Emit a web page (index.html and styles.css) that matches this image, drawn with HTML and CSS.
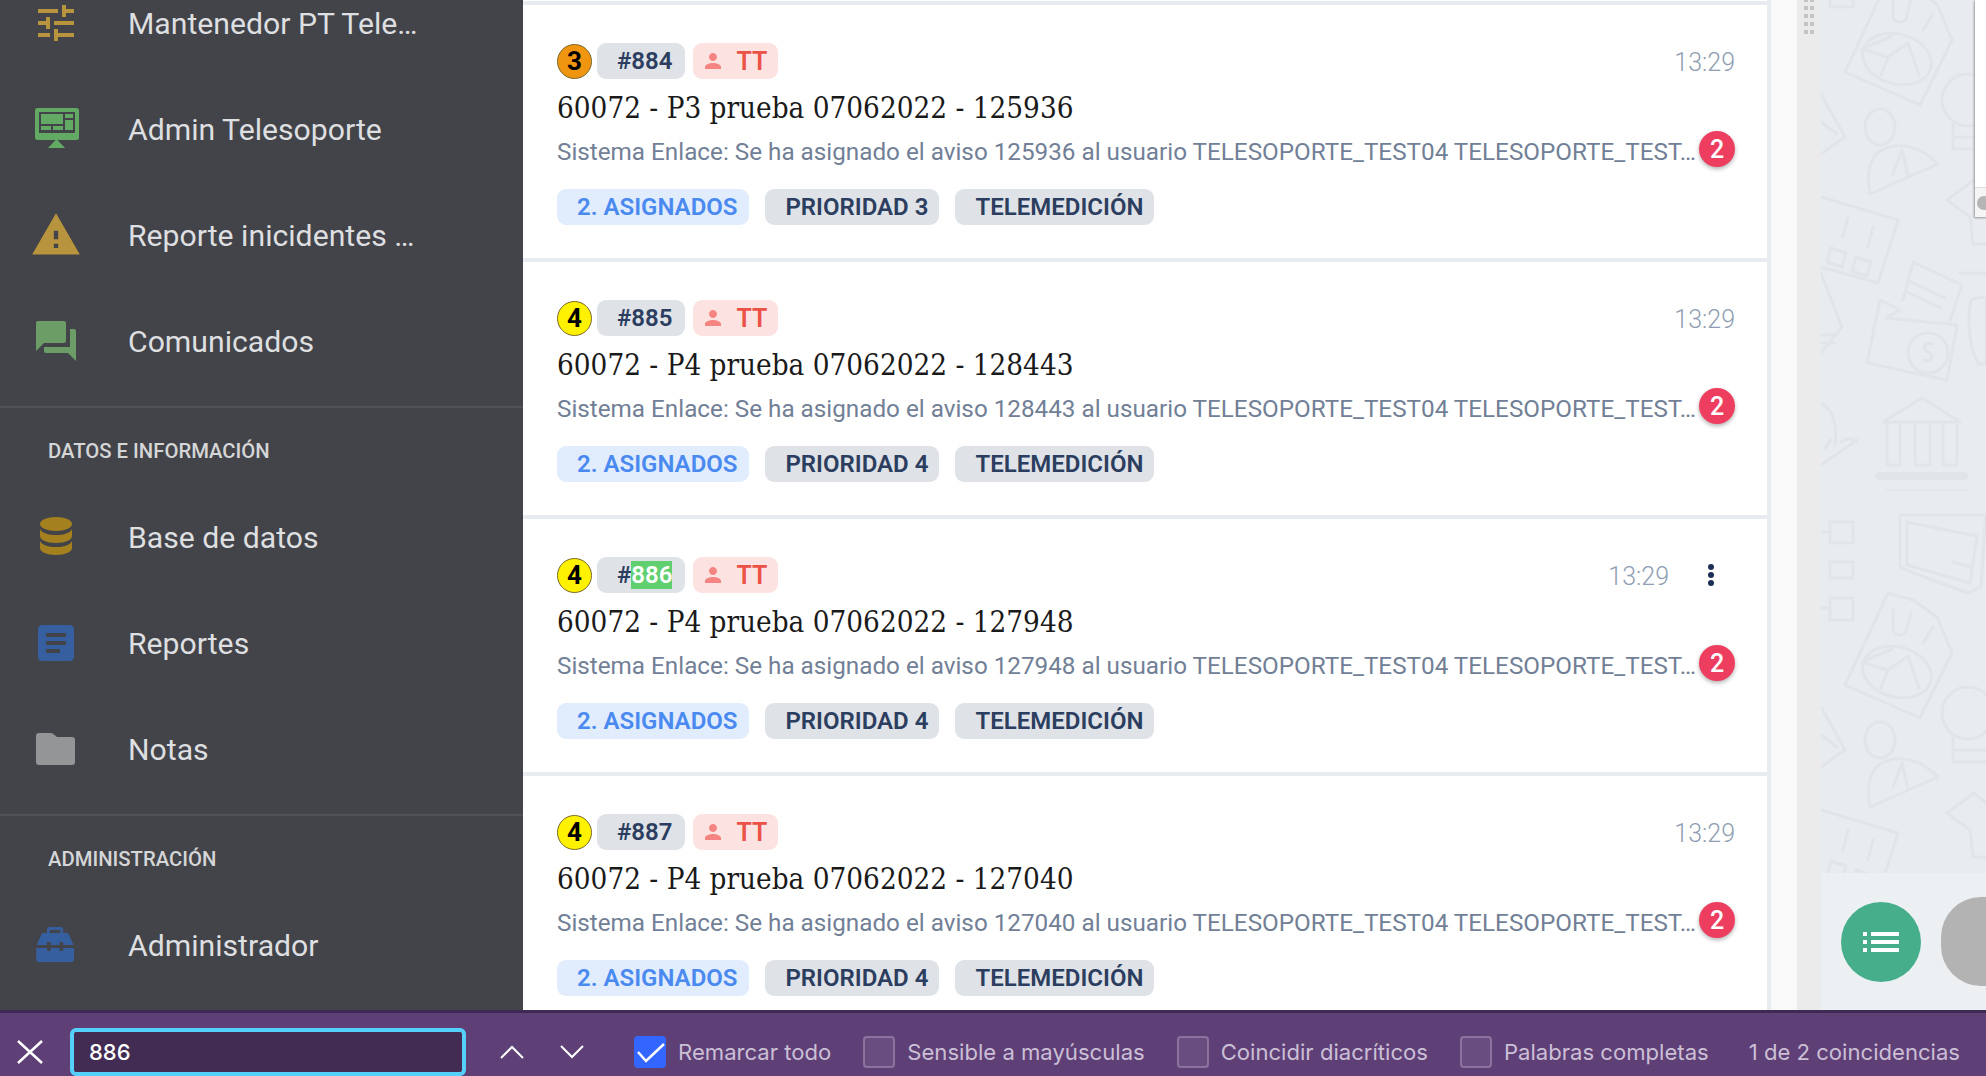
FILE: index.html
```html
<!DOCTYPE html>
<html lang="es">
<head>
<meta charset="utf-8">
<title>Telesoporte</title>
<link rel="stylesheet" href="styles.css">
</head>
<body>
<div class="app">
  <div class="main">
    <aside class="sidebar">
      <div class="side-scroll">
        <section class="side-group">
          <a class="side-item"><span class="side-icon"><svg class="ic-48 c-gold" viewBox="0 0 24 24"><path d="M3 17v2h6v-2H3zM3 5v2h10V5H3zm10 16v-2h8v-2h-8v-2h-2v6h2zM7 9v2H3v2h4v2h2V9H7zm14 4v-2H11v2h10zm-6-4h2V7h4V5h-4V3h-2v6z"/></svg></span><span class="side-label">Mantenedor PT Tele…</span></a>
          <a class="side-item"><span class="side-icon"><svg class="ic-48" viewBox="0 0 48 48"><rect x="3" y="3" width="44" height="32" rx="2.500" fill="#62a964"/><path d="M24.500 34 33 43H16z" fill="#62a964"/><rect x="7" y="7" width="36" height="21" fill="#434449"/><g fill="#62a964"><rect x="9" y="9" width="22" height="10"/><rect x="33" y="9" width="8" height="4"/><rect x="33" y="15" width="8" height="10"/><rect x="9" y="21" width="10" height="4"/><rect x="21" y="21" width="10" height="4"/></g></svg></span><span class="side-label">Admin Telesoporte</span></a>
          <a class="side-item"><span class="side-icon"><svg class="ic-52 c-gold" viewBox="0 0 24 24"><path d="M1 21h22L12 2 1 21zm12-3h-2v-2h2v2zm0-4h-2v-4h2v4z"/></svg></span><span class="side-label">Reporte inicidentes …</span></a>
          <a class="side-item"><span class="side-icon"><svg class="ic-48 c-green" viewBox="0 0 24 24"><path d="M21 6h-2v9H6v2c0 .55.45 1 1 1h11l4 4V7c0-.55-.45-1-1-1zm-4 6V3c0-.55-.45-1-1-1H3c-.55 0-1 .45-1 1v14l4-4h10c.55 0 1-.45 1-1z"/></svg></span><span class="side-label">Comunicados</span></a>
        </section>
        <section class="side-group">
          <h3 class="side-head">DATOS E INFORMACIÓN</h3>
          <a class="side-item"><span class="side-icon"><svg class="ic-48 c-ochre" viewBox="0 0 48 48"><ellipse cx="24" cy="11" rx="16" ry="7"/><path d="M8 16c2 4 8 6 16 6s14-2 16-6v7c0 4-7 7-16 7S8 27 8 23z"/><path d="M8 28c2 4 8 6 16 6s14-2 16-6v7c0 4-7 7-16 7S8 39 8 35z"/></svg></span><span class="side-label">Base de datos</span></a>
          <a class="side-item"><span class="side-icon"><svg class="ic-48 c-blue" viewBox="0 0 24 24"><path d="M19 3H5c-1.100 0-2 .9-2 2v14c0 1.100.9 2 2 2h14c1.100 0 2-.9 2-2V5c0-1.100-.9-2-2-2zm-5 14H7v-2h7v2zm3-4H7v-2h10v2zm0-4H7V7h10v2z"/></svg></span><span class="side-label">Reportes</span></a>
          <a class="side-item"><span class="side-icon"><svg class="ic-48 c-grey" viewBox="0 0 48 48"><path d="M7 8h12c1 0 2 .5 3 1.500L25 12h15c2 0 3 1 3 3v22c0 2-1 3-3 3H7c-2 0-3-1-3-3V11c0-2 1-3 3-3z"/></svg></span><span class="side-label">Notas</span></a>
        </section>
        <section class="side-group">
          <h3 class="side-head">ADMINISTRACIÓN</h3>
          <a class="side-item"><span class="side-icon"><svg class="ic-48 c-blue" viewBox="0 0 48 48"><g transform="translate(1.500 0) scale(.9 1)"><path d="M15 12V9c0-2 1-3 3-3h12c2 0 3 1 3 3v3h4c1 0 2 .5 2.500 2l5 10H33v-3h-4v3H19v-3h-4v3H3.500l5-10c.5-1.500 1.500-2 2.500-2zm3 0h12V9H18z"/><path d="M3 27h12v3h4v-3h10v3h4v-3h12v11c0 2-1 3-3 3H6c-2 0-3-1-3-3z"/></g></svg></span><span class="side-label">Administrador</span></a>
        </section>
      </div>
    </aside>

    <section class="list">
      <article class="card">
        <div class="card-top">
          <span class="prio prio-3">3</span>
          <span class="chip chip-id">#884</span>
          <span class="chip chip-user"><svg class="user-ic" viewBox="0 0 24 24"><path d="M12 12c2.210 0 4-1.790 4-4s-1.790-4-4-4-4 1.790-4 4 1.790 4 4 4zm0 2c-2.670 0-8 1.340-8 4v2h16v-2c0-2.660-5.330-4-8-4z"/></svg>TT</span>
          <time class="time">13:29</time>
        </div>
        <h2 class="title">60072 - P3 prueba 07062022 - 125936</h2>
        <div class="desc-row"><p class="desc">Sistema Enlace: Se ha asignado el aviso 125936 al usuario TELESOPORTE_TEST04 TELESOPORTE_TEST…</p><span class="badge">2</span></div>
        <div class="tags"><span class="chip chip-blue">2. ASIGNADOS</span><span class="chip chip-id">PRIORIDAD 3</span><span class="chip chip-id">TELEMEDICIÓN</span></div>
      </article>
      <article class="card">
        <div class="card-top">
          <span class="prio prio-4">4</span>
          <span class="chip chip-id">#885</span>
          <span class="chip chip-user"><svg class="user-ic" viewBox="0 0 24 24"><path d="M12 12c2.210 0 4-1.790 4-4s-1.790-4-4-4-4 1.790-4 4 1.790 4 4 4zm0 2c-2.670 0-8 1.340-8 4v2h16v-2c0-2.660-5.330-4-8-4z"/></svg>TT</span>
          <time class="time">13:29</time>
        </div>
        <h2 class="title">60072 - P4 prueba 07062022 - 128443</h2>
        <div class="desc-row"><p class="desc">Sistema Enlace: Se ha asignado el aviso 128443 al usuario TELESOPORTE_TEST04 TELESOPORTE_TEST…</p><span class="badge">2</span></div>
        <div class="tags"><span class="chip chip-blue">2. ASIGNADOS</span><span class="chip chip-id">PRIORIDAD 4</span><span class="chip chip-id">TELEMEDICIÓN</span></div>
      </article>
      <article class="card">
        <div class="card-top">
          <span class="prio prio-4">4</span>
          <span class="chip chip-id">#<mark class="hit">886</mark></span>
          <span class="chip chip-user"><svg class="user-ic" viewBox="0 0 24 24"><path d="M12 12c2.210 0 4-1.790 4-4s-1.790-4-4-4-4 1.790-4 4 1.790 4 4 4zm0 2c-2.670 0-8 1.340-8 4v2h16v-2c0-2.660-5.330-4-8-4z"/></svg>TT</span>
          <time class="time">13:29</time>
          <svg class="dots" viewBox="0 0 8 22"><circle cx="4" cy="3" r="3"/><circle cx="4" cy="11" r="3"/><circle cx="4" cy="19" r="3"/></svg>
        </div>
        <h2 class="title">60072 - P4 prueba 07062022 - 127948</h2>
        <div class="desc-row"><p class="desc">Sistema Enlace: Se ha asignado el aviso 127948 al usuario TELESOPORTE_TEST04 TELESOPORTE_TEST…</p><span class="badge">2</span></div>
        <div class="tags"><span class="chip chip-blue">2. ASIGNADOS</span><span class="chip chip-id">PRIORIDAD 4</span><span class="chip chip-id">TELEMEDICIÓN</span></div>
      </article>
      <article class="card">
        <div class="card-top">
          <span class="prio prio-4">4</span>
          <span class="chip chip-id">#887</span>
          <span class="chip chip-user"><svg class="user-ic" viewBox="0 0 24 24"><path d="M12 12c2.210 0 4-1.790 4-4s-1.790-4-4-4-4 1.790-4 4 1.790 4 4 4zm0 2c-2.670 0-8 1.340-8 4v2h16v-2c0-2.660-5.330-4-8-4z"/></svg>TT</span>
          <time class="time">13:29</time>
        </div>
        <h2 class="title">60072 - P4 prueba 07062022 - 127040</h2>
        <div class="desc-row"><p class="desc">Sistema Enlace: Se ha asignado el aviso 127040 al usuario TELESOPORTE_TEST04 TELESOPORTE_TEST…</p><span class="badge">2</span></div>
        <div class="tags"><span class="chip chip-blue">2. ASIGNADOS</span><span class="chip chip-id">PRIORIDAD 4</span><span class="chip chip-id">TELEMEDICIÓN</span></div>
      </article>
    </section>

    <div class="gutter"></div>
    <div class="handle">
      <span class="grip"></span>
    </div>

    <section class="chat">
      <div class="chat-bg">
        <svg class="doodles" viewBox="0 0 165 873" preserveAspectRatio="none">
          <defs>
            <g id="tile" fill="none" stroke="#e1e5e9" stroke-width="3" stroke-linejoin="round" stroke-linecap="round">
              <path d="M24 685 67 593l25 7 24 17 15 36-32 65z"/>
              <path d="M72 610v20c0 5 10 7 13 2l5-20M112 627l-10 16"/>
              <ellipse cx="76" cy="672" rx="35" ry="25" transform="rotate(15 76 672)"/>
              <path d="M41 662l26 8-7 18M67 670l20-14 11 32M41 662l30-13"/>
              <circle cx="147" cy="713" r="26"/>
              <path d="M132 738v24h33M132 750h33"/>
              <ellipse cx="59" cy="740" rx="15" ry="18"/>
              <path d="M49 807c-4-22 0-38 12-44 18-9 40-3 56 14z"/>
              <path d="M72 787l9-24 6 26"/>
              <path d="M0 707l24 43-24 17M0 735l16 12"/>
              <path d="M126 813l27-20 12 10M126 813l23 17 3 27h13"/>
              <path d="M0 197l77 23-20 63-57-16"/>
              <path d="M27 217l-5 20M52 227l-5 20M10 248l15 5-4 14-15-5zM35 257l15 5-4 14-15-5z"/>
              <path d="M82 300l10-38 49 23-12 35M90 282l34 16M86 292l34 16"/>
              <path d="M46 363l13-63 20 10-14 8 71 7-10 55z"/>
              <circle cx="107" cy="353" r="20"/>
              <path d="M111 344c-8-3-10 5-4 8s4 11-4 8"/>
              <path d="M0 273l21 54-21 26M0 335l14 0M0 343l14 0"/>
              <path d="M139 273h26M150 300c8-3 15-3 15-3v67h-7c-8-10-13-40-8-64z"/>
              <path d="M62 422l39-24 38 24z"/>
              <path d="M66 422v43h13v-43M94 422v43h15v-43M122 422v43h14v-43"/>
              <path d="M58 476h85" stroke-width="8"/>
              <path d="M65 490h82" stroke-width="1.500"/>
              <path d="M0 404c14 4 16 28 14 40M20 442c4-4 12-4 16 0"/>
              <path d="M36 440 0 465M10 440l-6 8"/>
              <path d="M79 515h85v10l-4 62-13 6-60-22-8-4z"/>
              <path d="M86 527v38l63 18 7-47-70-14z"/>
              <path d="M132 562l18 5"/>
              <path d="M9 522h23v21H9zM9 562h23v16H9zM9 598h23v22H9zM0 532h9M0 608h9"/>
            </g>
          </defs>
          <use href="#tile" y="-613"/>
          <use href="#tile"/>
          <use href="#tile" y="613"/>
        </svg>
      </div>
      <div class="chat-foot">
        <button class="fab"><svg class="fab-ic" viewBox="0 0 36 20"><path d="M0 0h4v4H0zM8 0h28v4H8zM0 8h4v4H0zM8 8h28v4H8zM0 16h4v4H0zM8 16h28v4H8z"/></svg></button>
        <span class="send"></span>
      </div>
      <div class="popup"><div class="popup-foot"><span class="popup-thumb"></span></div></div>
    </section>
  </div>

  <footer class="find">
    <svg class="find-x" viewBox="0 0 26 24"><path d="M1 1l24 22M25 1L1 23"/></svg>
    <div class="find-input">886</div>
    <svg class="find-arrow arrow-up" viewBox="0 0 24 14"><path d="M1 13 12 2l11 11"/></svg>
    <svg class="find-arrow arrow-down" viewBox="0 0 24 14"><path d="M1 1l11 11L23 1"/></svg>
    <span class="opt opt-first"><span class="box box-on"><svg viewBox="0 0 32 32"><path d="M4 16l8 9L30 8"/></svg></span>Remarcar todo</span>
    <span class="opt"><span class="box"></span>Sensible a mayúsculas</span>
    <span class="opt"><span class="box"></span>Coincidir diacríticos</span>
    <span class="opt"><span class="box"></span>Palabras completas</span>
    <span class="find-count">1 de 2 coincidencias</span>
  </footer>
</div>
</body>
</html>
```
FILE: styles.css
```css
* { box-sizing: border-box; }
html, body { margin: 0; height: 100%; overflow: hidden; }
body { font-family: Roboto, "Liberation Sans", sans-serif; background: #fff; }
.app { display: flex; flex-direction: column; height: 1076px; width: 1986px; overflow: hidden; }
.main { display: flex; height: 1010px; flex: none; overflow: hidden; }

/* sidebar */
.sidebar { width: 523px; flex: none; background: #434449; overflow: hidden; }
.side-scroll { margin-top: -30px; }
.side-group { border-bottom: 2px solid #505156; padding-bottom: 12px; }
.side-group:last-child { border-bottom: 0; }
.side-item { display: flex; align-items: center; height: 106px; color: #dedfe0; text-decoration: none; }
.side-icon { width: 128px; flex: none; display: flex; justify-content: center; }
.side-icon svg { display: block; margin-left: -16px; }
.side-label { font-size: 30.200px; line-height: 40px; padding-top: 2px; white-space: nowrap; }
.side-head { margin: 0; height: 76px; padding: 30px 0 0 48px; font-size: 20.300px; line-height: 26px; font-weight: 500; color: #d5d6d7; }
.ic-48 { width: 48px; height: 48px; }
.ic-52 { width: 52px; height: 52px; }
.c-gold { fill: #b8943e; }
.c-green { fill: #6d9d66; }
.c-ochre { fill: #a5801f; }
.c-blue { fill: #365f9f; }
.c-grey { fill: #949596; }

/* list */
.list { width: 1244px; flex: none; background: #fff; display: flex; flex-direction: column; padding-top: 1px; }
.card { height: 257px; flex: none; border-top: 4px solid #e8ebf0; padding: 38px 32px 0 34px; display: flex; flex-direction: column; }
.card-top { display: flex; align-items: center; height: 36px; }
.prio { width: 35px; height: 35px; border-radius: 50%; border: 1px solid #7a6a2a; color: #000; font-size: 26px; font-weight: 700; display: flex; align-items: center; justify-content: center; margin-right: 5px; }
.prio-3 { background: #f0950f; }
.prio-4 { background: #fff200; }
.chip { display: inline-flex; align-items: center; height: 36px; padding: 0 11px 0 20px; border-radius: 9px; font-size: 24px; font-weight: 600; white-space: nowrap; }
.chip-id { background: #dfe2e7; color: #2c3e5f; }
.card-top .chip-id { padding-right: 13px; }
.chip-user { background: #fce2e1; color: #ea5147; margin-left: 8px; padding: 0 11px 0 8px; font-size: 25px; width: 85px; }
.chip-blue { background: #e1ecfd; color: #4a8af0; padding-right: 12px; }
.user-ic { width: 24px; height: 24px; fill: #f58583; margin-right: 11px; flex: none; }
.hit { background: #5fcf6f; color: #fff; padding: 0; }
.time { margin-left: auto; margin-top: 2px; font-size: 25px; font-weight: 300; color: #8f9eb3; }
.dots { width: 8px; height: 22px; margin-left: 38px; margin-right: 20px; fill: #1c2f55; }
.title { margin: 11px 0 0; height: 36px; font-family: "DejaVu Serif Condensed", "DejaVu Serif", serif; font-stretch: condensed; font-size: 29.350px; line-height: 36px; font-weight: 400; color: #1a1a1a; white-space: nowrap; }
.desc-row { display: flex; align-items: flex-start; margin-top: 5px; height: 36px; }
.desc { margin: 6px 0 0; flex: 1; min-width: 0; font-size: 24.250px; line-height: 31px; color: #718096; white-space: nowrap; }
.badge { width: 36px; height: 36px; flex: none; margin: 0 0 0 2px; border-radius: 50%; background: #ee3e5f; color: #fff; font-size: 25px; font-weight: 500; display: flex; align-items: center; justify-content: center; box-shadow: 0 2px 4px rgba(0,0,0,.3); }
.tags { display: flex; gap: 16px; margin-top: 22px; }

/* gutter and handle */
.gutter { flex: none; background: #f9f9f9; border-left: 4px solid #e8ebf0; width: 30px; }
.handle { width: 24px; flex: none; background: #ebebeb; }
.grip { display: block; width: 10px; margin: 0 auto; height: 34px; background: conic-gradient(from 270deg at 4px 4px, #c4c4c4 90deg, transparent 0) 0 -2px / 6px 8px; }

/* chat column */
.chat { flex: 1; display: flex; flex-direction: column; position: relative; overflow: hidden; }
.chat-bg { height: 873px; flex: none; background: #e8ebef; }
.doodles { display: block; width: 100%; height: 100%; filter: blur(.7px); }
.chat-foot { flex: 1; background: #edf0f3; display: flex; align-items: center; padding-left: 20px; gap: 20px; }
.fab { width: 80px; height: 80px; flex: none; border: 0; border-radius: 50%; background: #47ae8c; display: flex; align-items: center; justify-content: center; padding: 0; }
.fab-ic { width: 36px; height: 20px; fill: #fff; }
.send { width: 89px; height: 89px; flex: none; border-radius: 40px; background: #b3b3b3; }
.popup { position: absolute; top: 0; left: 154px; width: 60px; height: 217px; background: #fff; box-shadow: -1px 1px 2px rgba(0,0,0,.35); }
.popup-foot { position: absolute; left: 0; right: 0; bottom: 0; height: 30px; background: #f5f5f5; border-top: 1px solid #ddd; display: flex; align-items: center; padding-left: 2px; }
.popup-thumb { width: 14px; height: 14px; border-radius: 50%; background: #b5b5b5; }

/* find bar */
.find { height: 66px; flex: none; background: #5e4077; border-top: 3px solid #3f2a55; padding-top: 15px; display: flex; align-items: center; font-family: Inter, "Liberation Sans", sans-serif; font-size: 22.100px; color: #cbbfd6; }
.find-x { width: 26px; height: 24px; margin-left: 17px; fill: none; stroke: #fff; stroke-width: 2.500px; flex: none; }
.find-input { width: 396px; height: 48px; margin-left: 27px; flex: none; background: #432c54; border: 4px solid #54d0fa; border-radius: 6px; color: #fff; padding: 0 15px; line-height: 40px; font-size: 22px; font-weight: 500; }
.find-arrow { width: 24px; height: 14px; fill: none; stroke: #fff; stroke-width: 2px; flex: none; }
.arrow-up { margin-left: 34px; }
.arrow-down { margin-left: 36px; }
.opt { display: flex; align-items: center; margin-left: 32px; white-space: nowrap; flex: none; }
.opt-first { margin-left: 50px; }
.box { width: 32px; height: 32px; border-radius: 4px; background: #6a4d80; border: 2px solid #8b739e; margin-right: 12px; flex: none; }
.box-on { background: #3366ff; border: 0; }
.box-on svg { display: block; width: 32px; height: 32px; fill: none; stroke: #fff; stroke-width: 2.500px; }
.find-count { margin-left: 40px; white-space: nowrap; flex: none; }
```
